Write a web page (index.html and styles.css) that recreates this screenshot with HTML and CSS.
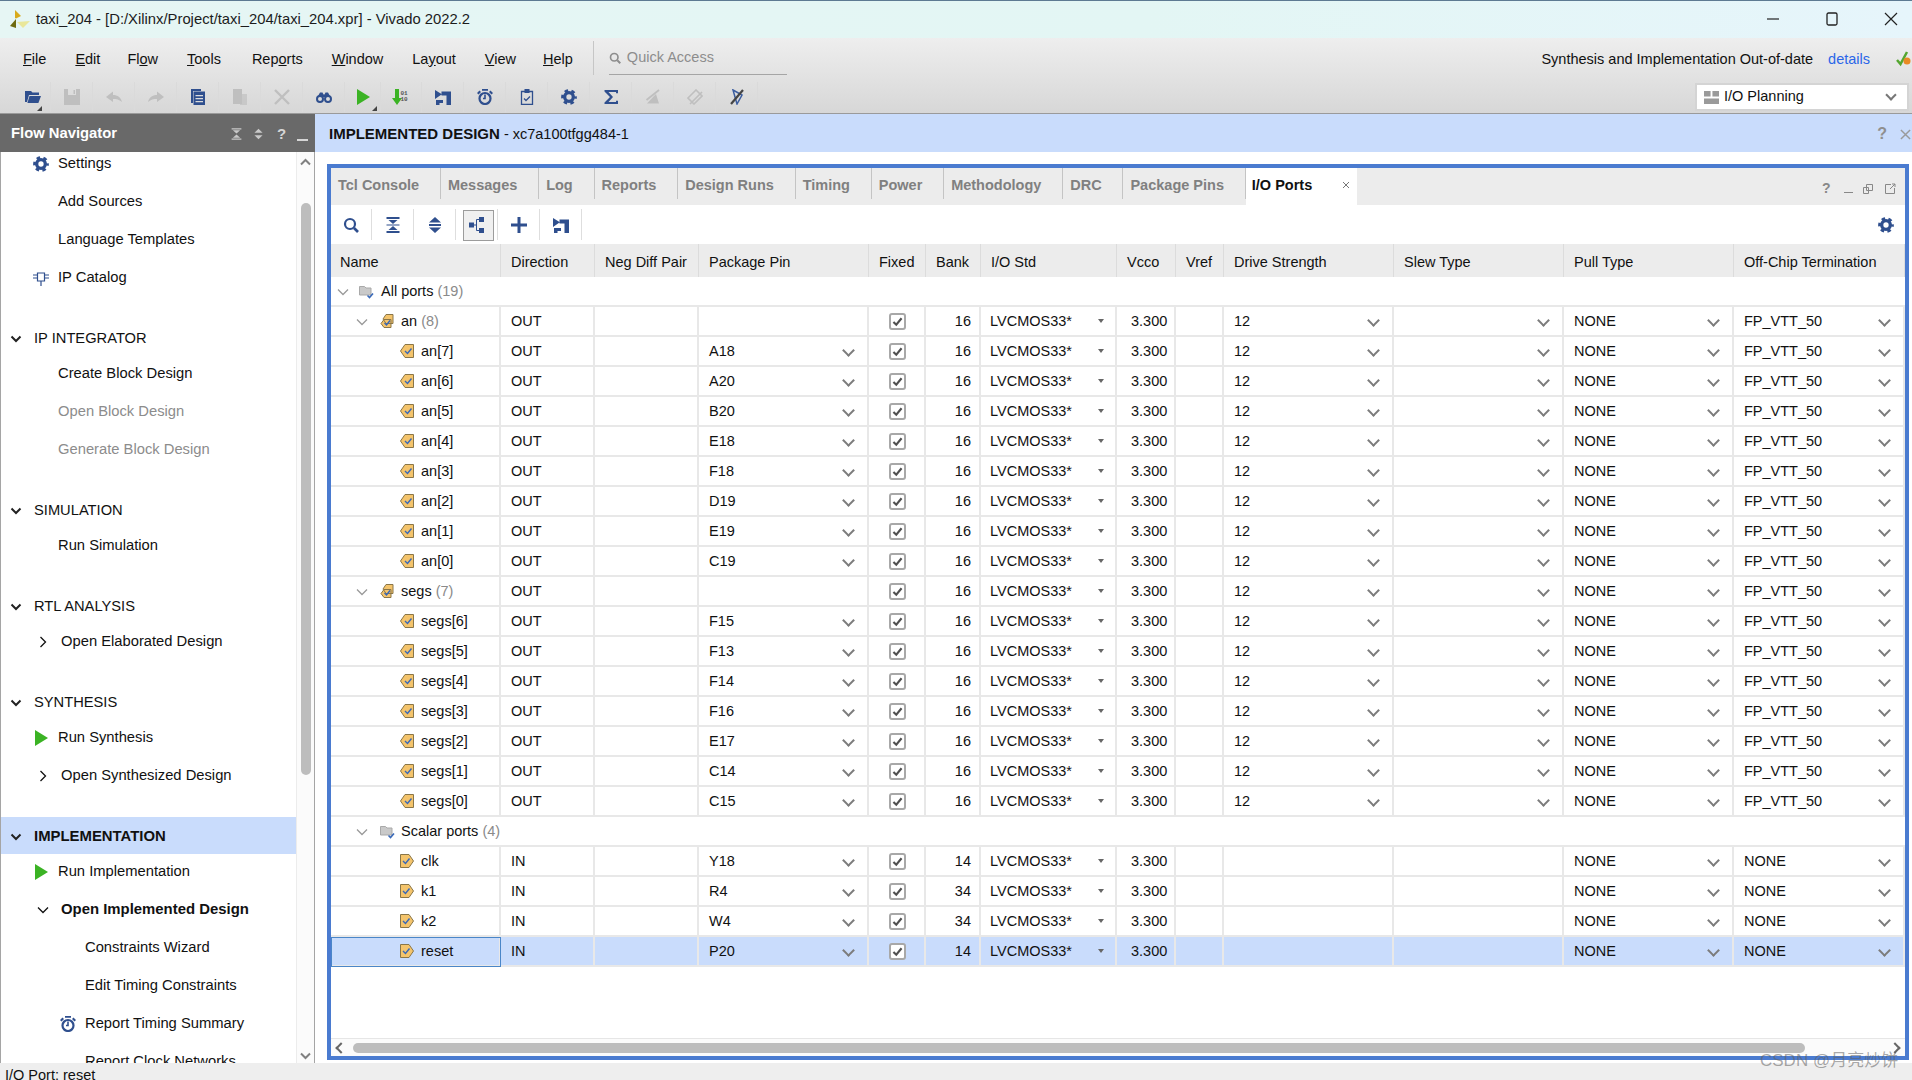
FILE: index.html
```html
<!DOCTYPE html>
<html lang="en">
<head>
<meta charset="utf-8">
<title>Vivado 2022.2</title>
<link rel="stylesheet" href="styles.css">
</head>
<body>
<svg class="defs" xmlns="http://www.w3.org/2000/svg">
<symbol id="folder" viewBox="0 0 16 16"><path d="M0 2h6l1.5 1.5H14V6H4L2 13H0z"/><path d="M4.500 7H16l-2.600 7H2.400z"/></symbol>
<symbol id="save" viewBox="0 0 16 16"><path fill-rule="evenodd" d="M0 0h16v16H0zM4 0v6h8V0zM9.500 1v4H11V1z"/></symbol>
<symbol id="undo" viewBox="0 0 16 16"><path d="M7 2.500 0 8l7 5V10c3.500 0 6 .5 9 3-1-4.500-4.500-7-9-7z"/></symbol>
<symbol id="redo" viewBox="0 0 16 16"><path d="M9 2.500 16 8l-7 5V10c-3.500 0-6 .5-9 3 1-4.500 4.500-7 9-7z"/></symbol>
<symbol id="doc" viewBox="0 0 16 16"><path d="M1 0h10v2H3v12H1z"/><path fill-rule="evenodd" d="M3.500 2.500H15V16H3.500zM5.500 6v1.300h7.500V6zM5.500 9v1.300h7.500V9zM5.500 12v1.300h7.500V12z"/></symbol>
<symbol id="paste" viewBox="0 0 16 16"><path d="M1 0h9v15H1z"/><path opacity=".65" d="M8 5h7v11H8z"/></symbol>
<symbol id="cross" viewBox="0 0 16 16"><path fill="none" stroke="currentColor" stroke-width="2.400" d="M1 1l14 14M15 1 1 15"/></symbol>
<symbol id="binoc" viewBox="0 0 16 16"><path d="M1.500 8 4 3.500h2.500l1 2h1l1-2H12L14.500 8z"/><circle cx="4" cy="10" r="3" fill="none" stroke="currentColor" stroke-width="2"/><circle cx="12" cy="10" r="3" fill="none" stroke="currentColor" stroke-width="2"/></symbol>
<symbol id="play" viewBox="0 0 16 16"><path d="M2 0 15 8 2 16z"/></symbol>
<symbol id="route" viewBox="0 0 16 16"><path d="M0 1l6.500 4V2.500H16V16h-4.500V6.500h-5V5.500L0 10zM1 16v-5h7v3H4.500v2z"/></symbol>
<symbol id="watch" viewBox="0 0 16 16"><circle cx="8" cy="9.500" r="5.500" fill="none" stroke="currentColor" stroke-width="2.200"/><path d="M5 0h6v1.800H5zM7.200 5.500h1.600v4.800H6V8.800h1.200zM0 4l2.500-2.500 1.500 1.500-2.500 2.500zM16 4l-2.500-2.500-1.500 1.500 2.500 2.500z"/></symbol>
<symbol id="clip" viewBox="0 0 16 16"><path fill="none" stroke="currentColor" stroke-width="1.300" d="M2.500 2.500h11v13h-11z"/><path d="M5.500 0h5v4h-5z"/><path fill="none" stroke="currentColor" stroke-width="1.300" d="M5 9.500l2 2 4-4"/></symbol>
<symbol id="gear" viewBox="0 0 24 24"><circle cx="12" cy="12" r="6.500" fill="none" stroke="currentColor" stroke-width="5"/><circle cx="12" cy="12" r="9.800" fill="none" stroke="currentColor" stroke-width="4" stroke-dasharray="5.200 5.060" stroke-dashoffset="2.600"/></symbol>
<symbol id="sigma" viewBox="0 0 16 16"><path d="M1.500 1H15v3.200h-2V3H5.500L10 8l-4.500 5H13v-1.200h2V15H1.500v-1.500L7 8 1.500 2.500z"/></symbol>
<symbol id="tri" viewBox="0 0 16 16"><path d="M2 14.500h12L11 5 9 7z"/><path fill="none" stroke="currentColor" stroke-width="1.800" d="M1.500 11 14 1"/></symbol>
<symbol id="dia" viewBox="0 0 16 16"><path fill="none" stroke="currentColor" stroke-width="1.600" d="M1 9l8-8 6 6-8 8zM3 15 15 3"/></symbol>
<symbol id="slash" viewBox="0 0 16 16"><path fill="none" stroke="#3c5ea0" stroke-width="1.500" d="M4 1l9 5-5 9z"/><path fill="none" stroke="#444" stroke-width="2.200" d="M2 15 14 1"/></symbol>
<symbol id="search" viewBox="0 0 16 16"><circle cx="7" cy="7" r="5" fill="none" stroke="currentColor" stroke-width="2.200"/><path fill="none" stroke="currentColor" stroke-width="2.600" d="M11 11l4 4"/></symbol>
<symbol id="expand" viewBox="0 0 16 16"><path d="M1.500 0h13v2h-13zM3.500 3h9L8 7zM1.500 7.500h13v1h-13zM8 9l4.500 4h-9zM1.500 14h13v2h-13z"/></symbol>
<symbol id="collapse" viewBox="0 0 16 16"><path d="M8 0l6 5.500H2zM2 7h12v2H2zM2 10.500h12L8 16z"/></symbol>
<symbol id="group" viewBox="0 0 16 16"><path d="M0 5.500h5v5H0zM10 0h5v5h-5zM10 11h5v5h-5z"/><path fill="none" stroke="currentColor" d="M5 8h2.500M7.500 2.500v11M7.500 2.500H10M7.500 13.500H10"/></symbol>
<symbol id="plus" viewBox="0 0 16 16"><path fill="none" stroke="currentColor" stroke-width="3" d="M8 0v16M0 8h16"/></symbol>
<symbol id="ipcat" viewBox="0 0 16 16"><path fill="none" stroke="currentColor" stroke-width="1.200" d="M4.500 3h7v8h-7zM0 5h4.500M0 8h4.500M11.500 5H16M11.500 8H16M8 11v5"/></symbol>
<symbol id="navexp" viewBox="0 0 16 16"><path d="M2 1h12v1.500H2zM3.500 3.500h9L8 7.500zM8 8.500l4.500 4h-9zM2 13.500h12V15H2z"/></symbol>
<symbol id="navcol" viewBox="0 0 16 16"><path d="M8 1.500l5 5H3zM3 9.500h10l-5 5z"/></symbol>
<symbol id="fold" viewBox="0 0 16 16"><path fill="#c9c9c9" stroke="#a9a9a9" d="M1.500 3.500h5l1.500 1.500h5v7h-11.500z"/><path fill="none" stroke="#3868b8" stroke-width="1.600" d="M9.500 12.500l2 2 3.500-4"/></symbol>
<symbol id="bus" viewBox="0 0 16 16"><path fill="#f4c46c" stroke="#8a7648" d="M7 1.500h7v9H7L4 6zM5 6.500h7v8H5L2 10.500z"/><path fill="none" stroke="#3868b8" stroke-width="1.400" d="M5.500 10l2 2 3.500-4.500"/></symbol>
<symbol id="pout" viewBox="0 0 16 16"><path fill="#f4c46c" stroke="#8a7648" d="M6 1.500h8.500v13H6L1.500 8z"/><path fill="none" stroke="#3868b8" stroke-width="1.400" d="M6 8l2.500 2.500 4-5"/></symbol>
<symbol id="pin" viewBox="0 0 16 16"><path fill="#f4c46c" stroke="#8a7648" d="M1.500 1.500H10L14.500 8 10 14.500H1.500z"/><path fill="none" stroke="#3868b8" stroke-width="1.400" d="M4 8l2.500 2.500 4-5"/></symbol>
<symbol id="tick" viewBox="0 0 16 16"><path fill="none" stroke="currentColor" stroke-width="2.600" d="M3 8.500l3.500 3.500L13 4"/></symbol>
<symbol id="tree" viewBox="0 0 12 12"><path fill="none" stroke="currentColor" stroke-width="1.300" d="M1 3.500l5 5 5-5"/></symbol>
<symbol id="treer" viewBox="0 0 12 12"><path fill="none" stroke="currentColor" stroke-width="1.300" d="M3.500 1l5 5-5 5"/></symbol>
<symbol id="navch" viewBox="0 0 12 12"><path fill="none" stroke="currentColor" stroke-width="2" d="M1.500 3.500 6 8l4.500-4.500"/></symbol>
</svg>

<header class="titlebar">
  <svg class="logo" viewBox="0 0 22 21"><path fill="#d8aa1c" d="M6 1l6 6-5 2.500L6 9z"/><path fill="#6e6a10" d="M1 17l6-7v9z"/><path fill="#e9e79a" d="M8 13l13-1-7 7z"/></svg>
  <span class="apptitle">taxi_204 - [D:/Xilinx/Project/taxi_204/taxi_204.xpr] - Vivado 2022.2</span>
  <div class="winbtns">
    <svg class="wb" viewBox="0 0 14 14"><path stroke="#222" stroke-width="1.200" d="M1 7h12"/></svg>
    <svg class="wb" viewBox="0 0 14 14"><rect x="2" y="1" width="10" height="12" rx="1.500" fill="none" stroke="#222" stroke-width="1.300"/></svg>
    <svg class="wb" viewBox="0 0 14 14"><path stroke="#222" stroke-width="1.200" d="M1 1l12 12M13 1 1 13"/></svg>
  </div>
</header>

<section class="chrome">
  <div class="menubar">
    <nav class="menus">
      <span><u>F</u>ile</span><span><u>E</u>dit</span><span class="m-flow">Fl<u>o</u>w</span><span><u>T</u>ools</span><span class="m-rep">Rep<u>o</u>rts</span><span><u>W</u>indow</span><span>La<u>y</u>out</span><span><u>V</u>iew</span><span class="m-help"><u>H</u>elp</span>
    </nav>
    <div class="quick"><svg class="qi"><use href="#search"/></svg><span>Quick Access</span></div>
    <div class="status"><span>Synthesis and Implementation Out-of-date</span><a class="details">details</a>
      <svg class="okmark" viewBox="0 0 16 16"><path fill="none" stroke="#55a630" stroke-width="2.500" d="M1 9l3.500 4L11 1"/><circle cx="11" cy="10" r="3.500" fill="#e98a24"/></svg>
    </div>
  </div>
  <div class="toolbar">
    <span class="tb navy more first"><svg><use href="#folder"/></svg></span>
    <span class="tb off"><svg><use href="#save"/></svg></span>
    <span class="tb off"><svg><use href="#undo"/></svg></span>
    <span class="tb off"><svg><use href="#redo"/></svg></span>
    <span class="tb navy"><svg><use href="#doc"/></svg></span>
    <span class="tb off"><svg><use href="#paste"/></svg></span>
    <span class="tb off"><svg><use href="#cross"/></svg></span>
    <span class="tb navy"><svg><use href="#binoc"/></svg></span>
    <span class="tb green more narrow"><svg><use href="#play"/></svg></span>
    <span class="tb bitcell"><svg viewBox="0 0 16 16"><path fill="#3bb324" d="M3 0h4v9h3l-5 7-5-7h3z"/><text class="bits" x="8.500" y="6">01</text><text class="bits" x="8.500" y="12">10</text></svg></span>
    <span class="tb navy"><svg><use href="#route"/></svg></span>
    <span class="tb navy"><svg><use href="#watch"/></svg></span>
    <span class="tb navy"><svg><use href="#clip"/></svg></span>
    <span class="tb navy"><svg><use href="#gear"/></svg></span>
    <span class="tb navy"><svg><use href="#sigma"/></svg></span>
    <span class="tb off"><svg><use href="#tri"/></svg></span>
    <span class="tb off"><svg><use href="#dia"/></svg></span>
    <span class="tb"><svg><use href="#slash"/></svg></span>
    <div class="layout"><svg class="lay" viewBox="0 0 16 16"><path fill="#9a9a9a" d="M0 1h7v6H0zM9 1h7v6H9zM0 9h16v6H0z"/></svg><span>I/O Planning</span><i class="arrow"></i></div>
  </div>
</section>

<div class="workspace">
  <aside class="flownav">
    <div class="navhead">
      <span class="navtitle">Flow Navigator</span>
      <svg class="nh"><use href="#navexp"/></svg>
      <svg class="nh"><use href="#navcol"/></svg>
      <b class="nq">?</b>
      <span class="nmin"></span>
    </div>
    <div class="navbody">
      <div class="navlist">
        <div class="it"><svg class="slot navy"><use href="#gear"/></svg>Settings</div>
        <div class="it"><span class="slot"></span>Add Sources</div>
        <div class="it"><span class="slot"></span>Language Templates</div>
        <div class="it"><svg class="slot navy"><use href="#ipcat"/></svg>IP Catalog</div>

        <div class="sec"><svg class="sch"><use href="#navch"/></svg>IP INTEGRATOR</div>
        <div class="items">
          <div class="it"><span class="slot"></span>Create Block Design</div>
          <div class="it dim"><span class="slot"></span>Open Block Design</div>
          <div class="it dim"><span class="slot"></span>Generate Block Design</div>
        </div>

        <div class="sec"><svg class="sch"><use href="#navch"/></svg>SIMULATION</div>
        <div class="items">
          <div class="it"><span class="slot"></span>Run Simulation</div>
        </div>

        <div class="sec"><svg class="sch"><use href="#navch"/></svg>RTL ANALYSIS</div>
        <div class="items">
          <div class="it sub"><svg class="slot"><use href="#treer"/></svg>Open Elaborated Design</div>
        </div>

        <div class="sec"><svg class="sch"><use href="#navch"/></svg>SYNTHESIS</div>
        <div class="items">
          <div class="it"><svg class="slot green"><use href="#play"/></svg>Run Synthesis</div>
          <div class="it sub"><svg class="slot"><use href="#treer"/></svg>Open Synthesized Design</div>
        </div>

        <div class="sec active"><svg class="sch"><use href="#navch"/></svg>IMPLEMENTATION</div>
        <div class="items">
          <div class="it"><svg class="slot green"><use href="#play"/></svg>Run Implementation</div>
          <div class="it sub strong"><svg class="slot"><use href="#tree"/></svg>Open Implemented Design</div>
          <div class="it deep"><span class="slot"></span>Constraints Wizard</div>
          <div class="it deep"><span class="slot"></span>Edit Timing Constraints</div>
          <div class="it deep"><svg class="slot navy"><use href="#watch"/></svg>Report Timing Summary</div>
          <div class="it deep"><span class="slot"></span>Report Clock Networks</div>
        </div>
      </div>
      <div class="navscroll">
        <svg class="sa up"><use href="#navch"/></svg>
        <div class="sthumb"></div>
        <svg class="sa down"><use href="#navch"/></svg>
      </div>
    </div>
  </aside>

  <main class="main">
    <div class="dhead">
      <span><b>IMPLEMENTED DESIGN</b> - xc7a100tfgg484-1</span>
      <b class="dq">?</b>
      <svg class="dx" viewBox="0 0 12 12"><path stroke="#9a9a9a" stroke-width="1.600" d="M1 1l10 10M11 1 1 11"/></svg>
    </div>
    <div class="panel">
      <div class="tabs">
        <span class="tab">Tcl Console</span><span class="tab">Messages</span><span class="tab">Log</span><span class="tab">Reports</span><span class="tab">Design Runs</span><span class="tab">Timing</span><span class="tab">Power</span><span class="tab">Methodology</span><span class="tab">DRC</span><span class="tab">Package Pins</span>
        <span class="tab on">I/O Ports<svg class="tx" viewBox="0 0 8 8"><path stroke="#777" d="M1 1l6 6M7 1 1 7"/></svg></span>
        <div class="tabtools">
          <span class="tq">?</span>
          <span class="tmin"></span>
          <svg class="tt" viewBox="0 0 12 12"><path fill="none" stroke="#888" d="M4.500 1.500h6v6h-6zM1.500 4.500h5v6h-5z"/></svg>
          <svg class="tt" viewBox="0 0 12 12"><path fill="none" stroke="#888" d="M7 1.500H1.500v9h9V5M6 6l5-5M8 1h3v3"/></svg>
        </div>
      </div>
      <div class="tbar">
        <span class="tc"><svg><use href="#search"/></svg></span>
        <span class="tc"><svg><use href="#expand"/></svg></span>
        <span class="tc"><svg><use href="#collapse"/></svg></span>
        <span class="tc pressed"><svg><use href="#group"/></svg></span>
        <span class="tc"><svg><use href="#plus"/></svg></span>
        <span class="tc"><svg><use href="#route"/></svg></span>
        <svg class="tgear"><use href="#gear"/></svg>
      </div>
      <div class="grid">
        <table class="ports">
          <colgroup><col class="c1"><col class="c2"><col class="c3"><col class="c4"><col class="c5"><col class="c6"><col class="c7"><col class="c8"><col class="c9"><col class="c10"><col class="c10"><col class="c10"><col class="c13"></colgroup>
          <thead><tr><th>Name</th><th>Direction</th><th>Neg Diff Pair</th><th>Package Pin</th><th>Fixed</th><th>Bank</th><th>I/O Std</th><th>Vcco</th><th>Vref</th><th>Drive Strength</th><th>Slew Type</th><th>Pull Type</th><th>Off-Chip Termination</th></tr></thead>
          <tbody>
            <tr><td class="lv0 whole" colspan="13"><svg class="tw"><use href="#tree"/></svg><svg class="ic"><use href="#fold"/></svg>All ports <em>(19)</em></td></tr>
            <tr><td class="lv1"><svg class="tw"><use href="#tree"/></svg><svg class="ic"><use href="#bus"/></svg>an <em>(8)</em></td><td>OUT</td><td></td><td></td><td class="ck"><span class="cb"><svg><use href="#tick"/></svg></span></td><td class="r">16</td><td class="dd">LVCMOS33*</td><td class="v">3.300</td><td></td><td class="sel">12</td><td class="sel"></td><td class="sel">NONE</td><td class="sel">FP_VTT_50</td></tr>
            <tr><td class="lv2"><svg class="ic"><use href="#pout"/></svg>an[7]</td><td>OUT</td><td></td><td class="sel">A18</td><td class="ck"><span class="cb"><svg><use href="#tick"/></svg></span></td><td class="r">16</td><td class="dd">LVCMOS33*</td><td class="v">3.300</td><td></td><td class="sel">12</td><td class="sel"></td><td class="sel">NONE</td><td class="sel">FP_VTT_50</td></tr>
            <tr><td class="lv2"><svg class="ic"><use href="#pout"/></svg>an[6]</td><td>OUT</td><td></td><td class="sel">A20</td><td class="ck"><span class="cb"><svg><use href="#tick"/></svg></span></td><td class="r">16</td><td class="dd">LVCMOS33*</td><td class="v">3.300</td><td></td><td class="sel">12</td><td class="sel"></td><td class="sel">NONE</td><td class="sel">FP_VTT_50</td></tr>
            <tr><td class="lv2"><svg class="ic"><use href="#pout"/></svg>an[5]</td><td>OUT</td><td></td><td class="sel">B20</td><td class="ck"><span class="cb"><svg><use href="#tick"/></svg></span></td><td class="r">16</td><td class="dd">LVCMOS33*</td><td class="v">3.300</td><td></td><td class="sel">12</td><td class="sel"></td><td class="sel">NONE</td><td class="sel">FP_VTT_50</td></tr>
            <tr><td class="lv2"><svg class="ic"><use href="#pout"/></svg>an[4]</td><td>OUT</td><td></td><td class="sel">E18</td><td class="ck"><span class="cb"><svg><use href="#tick"/></svg></span></td><td class="r">16</td><td class="dd">LVCMOS33*</td><td class="v">3.300</td><td></td><td class="sel">12</td><td class="sel"></td><td class="sel">NONE</td><td class="sel">FP_VTT_50</td></tr>
            <tr><td class="lv2"><svg class="ic"><use href="#pout"/></svg>an[3]</td><td>OUT</td><td></td><td class="sel">F18</td><td class="ck"><span class="cb"><svg><use href="#tick"/></svg></span></td><td class="r">16</td><td class="dd">LVCMOS33*</td><td class="v">3.300</td><td></td><td class="sel">12</td><td class="sel"></td><td class="sel">NONE</td><td class="sel">FP_VTT_50</td></tr>
            <tr><td class="lv2"><svg class="ic"><use href="#pout"/></svg>an[2]</td><td>OUT</td><td></td><td class="sel">D19</td><td class="ck"><span class="cb"><svg><use href="#tick"/></svg></span></td><td class="r">16</td><td class="dd">LVCMOS33*</td><td class="v">3.300</td><td></td><td class="sel">12</td><td class="sel"></td><td class="sel">NONE</td><td class="sel">FP_VTT_50</td></tr>
            <tr><td class="lv2"><svg class="ic"><use href="#pout"/></svg>an[1]</td><td>OUT</td><td></td><td class="sel">E19</td><td class="ck"><span class="cb"><svg><use href="#tick"/></svg></span></td><td class="r">16</td><td class="dd">LVCMOS33*</td><td class="v">3.300</td><td></td><td class="sel">12</td><td class="sel"></td><td class="sel">NONE</td><td class="sel">FP_VTT_50</td></tr>
            <tr><td class="lv2"><svg class="ic"><use href="#pout"/></svg>an[0]</td><td>OUT</td><td></td><td class="sel">C19</td><td class="ck"><span class="cb"><svg><use href="#tick"/></svg></span></td><td class="r">16</td><td class="dd">LVCMOS33*</td><td class="v">3.300</td><td></td><td class="sel">12</td><td class="sel"></td><td class="sel">NONE</td><td class="sel">FP_VTT_50</td></tr>
            <tr><td class="lv1"><svg class="tw"><use href="#tree"/></svg><svg class="ic"><use href="#bus"/></svg>segs <em>(7)</em></td><td>OUT</td><td></td><td></td><td class="ck"><span class="cb"><svg><use href="#tick"/></svg></span></td><td class="r">16</td><td class="dd">LVCMOS33*</td><td class="v">3.300</td><td></td><td class="sel">12</td><td class="sel"></td><td class="sel">NONE</td><td class="sel">FP_VTT_50</td></tr>
            <tr><td class="lv2"><svg class="ic"><use href="#pout"/></svg>segs[6]</td><td>OUT</td><td></td><td class="sel">F15</td><td class="ck"><span class="cb"><svg><use href="#tick"/></svg></span></td><td class="r">16</td><td class="dd">LVCMOS33*</td><td class="v">3.300</td><td></td><td class="sel">12</td><td class="sel"></td><td class="sel">NONE</td><td class="sel">FP_VTT_50</td></tr>
            <tr><td class="lv2"><svg class="ic"><use href="#pout"/></svg>segs[5]</td><td>OUT</td><td></td><td class="sel">F13</td><td class="ck"><span class="cb"><svg><use href="#tick"/></svg></span></td><td class="r">16</td><td class="dd">LVCMOS33*</td><td class="v">3.300</td><td></td><td class="sel">12</td><td class="sel"></td><td class="sel">NONE</td><td class="sel">FP_VTT_50</td></tr>
            <tr><td class="lv2"><svg class="ic"><use href="#pout"/></svg>segs[4]</td><td>OUT</td><td></td><td class="sel">F14</td><td class="ck"><span class="cb"><svg><use href="#tick"/></svg></span></td><td class="r">16</td><td class="dd">LVCMOS33*</td><td class="v">3.300</td><td></td><td class="sel">12</td><td class="sel"></td><td class="sel">NONE</td><td class="sel">FP_VTT_50</td></tr>
            <tr><td class="lv2"><svg class="ic"><use href="#pout"/></svg>segs[3]</td><td>OUT</td><td></td><td class="sel">F16</td><td class="ck"><span class="cb"><svg><use href="#tick"/></svg></span></td><td class="r">16</td><td class="dd">LVCMOS33*</td><td class="v">3.300</td><td></td><td class="sel">12</td><td class="sel"></td><td class="sel">NONE</td><td class="sel">FP_VTT_50</td></tr>
            <tr><td class="lv2"><svg class="ic"><use href="#pout"/></svg>segs[2]</td><td>OUT</td><td></td><td class="sel">E17</td><td class="ck"><span class="cb"><svg><use href="#tick"/></svg></span></td><td class="r">16</td><td class="dd">LVCMOS33*</td><td class="v">3.300</td><td></td><td class="sel">12</td><td class="sel"></td><td class="sel">NONE</td><td class="sel">FP_VTT_50</td></tr>
            <tr><td class="lv2"><svg class="ic"><use href="#pout"/></svg>segs[1]</td><td>OUT</td><td></td><td class="sel">C14</td><td class="ck"><span class="cb"><svg><use href="#tick"/></svg></span></td><td class="r">16</td><td class="dd">LVCMOS33*</td><td class="v">3.300</td><td></td><td class="sel">12</td><td class="sel"></td><td class="sel">NONE</td><td class="sel">FP_VTT_50</td></tr>
            <tr><td class="lv2"><svg class="ic"><use href="#pout"/></svg>segs[0]</td><td>OUT</td><td></td><td class="sel">C15</td><td class="ck"><span class="cb"><svg><use href="#tick"/></svg></span></td><td class="r">16</td><td class="dd">LVCMOS33*</td><td class="v">3.300</td><td></td><td class="sel">12</td><td class="sel"></td><td class="sel">NONE</td><td class="sel">FP_VTT_50</td></tr>
            <tr><td class="lv1 whole" colspan="13"><svg class="tw"><use href="#tree"/></svg><svg class="ic"><use href="#fold"/></svg>Scalar ports <em>(4)</em></td></tr>
            <tr><td class="lv2"><svg class="ic"><use href="#pin"/></svg>clk</td><td>IN</td><td></td><td class="sel">Y18</td><td class="ck"><span class="cb"><svg><use href="#tick"/></svg></span></td><td class="r">14</td><td class="dd">LVCMOS33*</td><td class="v">3.300</td><td></td><td></td><td></td><td class="sel">NONE</td><td class="sel">NONE</td></tr>
            <tr><td class="lv2"><svg class="ic"><use href="#pin"/></svg>k1</td><td>IN</td><td></td><td class="sel">R4</td><td class="ck"><span class="cb"><svg><use href="#tick"/></svg></span></td><td class="r">34</td><td class="dd">LVCMOS33*</td><td class="v">3.300</td><td></td><td></td><td></td><td class="sel">NONE</td><td class="sel">NONE</td></tr>
            <tr><td class="lv2"><svg class="ic"><use href="#pin"/></svg>k2</td><td>IN</td><td></td><td class="sel">W4</td><td class="ck"><span class="cb"><svg><use href="#tick"/></svg></span></td><td class="r">34</td><td class="dd">LVCMOS33*</td><td class="v">3.300</td><td></td><td></td><td></td><td class="sel">NONE</td><td class="sel">NONE</td></tr>
            <tr class="picked"><td class="lv2"><svg class="ic"><use href="#pin"/></svg>reset</td><td>IN</td><td></td><td class="sel">P20</td><td class="ck"><span class="cb"><svg><use href="#tick"/></svg></span></td><td class="r">14</td><td class="dd">LVCMOS33*</td><td class="v">3.300</td><td></td><td></td><td></td><td class="sel">NONE</td><td class="sel">NONE</td></tr>
          </tbody>
        </table>
      </div>
      <div class="hscroll">
        <i class="ha left"></i>
        <div class="hthumb"></div>
        <i class="ha right"></i>
      </div>
    </div>
  </main>
</div>

<footer class="statusbar">I/O Port: reset</footer>
<div class="watermark">CSDN @月亮炒饼</div>
</body>
</html>
```

FILE: styles.css
```css
* { box-sizing: border-box; }
html, body { margin: 0; padding: 0; }
body {
  width: 1912px; height: 1080px; overflow: hidden; position: relative;
  display: flex; flex-direction: column;
  font: 14.5px/1.2 "Liberation Sans", Arial, sans-serif; color: #111; background: #fff;
}
.defs { display: none; }
.navy { color: #2f4f8e; fill: #2f4f8e; }
.green { color: #3bb324; fill: #3bb324; }

/* title bar */
.titlebar {
  height: 38px; flex: none; display: flex; align-items: center;
  border-top: 1px solid #5d7a92;
  background: linear-gradient(90deg, #e6f6f4, #e3f6f4 60%, #e6f5fb);
  padding-left: 9px;
}
.logo { width: 22px; height: 21px; margin-top: -1px; flex: none; }
.apptitle { margin-left: 5px; font-size: 14.8px; color: #1c1c1c; }
.winbtns { margin-left: auto; display: flex; gap: 45px; padding-right: 14px; margin-top: -2px; }
.wb { width: 14px; height: 14px; display: block; }

/* menu + toolbar */
.chrome {
  flex: none; height: 76px; border-bottom: 1px solid #9a9a9a;
  background: linear-gradient(180deg, #eeeeee, #d7d7d7);
}
.menubar { height: 41px; display: flex; align-items: center; padding: 2px 0 0 23px; }
.menus { display: flex; gap: 29px; }
.m-flow { margin-left: -2px; }
.m-rep { margin-left: 2px; }
.m-help { margin-left: -2px; }
.quick {
  margin-left: 20px; width: 194px; height: 34px; margin-top: -4px;
  border-left: 1px solid #c6c6c6; position: relative;
  display: flex; align-items: center; color: #8d8d8d; padding-left: 15px;
}
.quick::after { content: ""; position: absolute; left: 15px; right: 0; bottom: 0; height: 1px; background: #a5a5a5; }
.qi { width: 12px; height: 12px; margin-right: 6px; color: #8d8d8d; fill: #8d8d8d; }
.status { margin-left: auto; display: flex; align-items: center; }
.details { color: #2a66e8; margin-left: 15px; }
.okmark { width: 16px; height: 16px; margin-left: 26px; margin-right: 0; flex: none; }
.toolbar { height: 34px; display: flex; align-items: center; padding: 2px 0 0 9px; }
.tb {
  width: 42px; height: 30px; flex: none; display: flex; align-items: center; justify-content: center;
  border-right: 1px solid #dadada; position: relative;
}
.tb svg { width: 16px; height: 16px; display: block; }
.tb.first svg { margin-left: 6px; }
.tb.narrow { width: 36px; }
.tb.bitcell { width: 41px; }
.tb.bitcell svg { margin-right: 2px; }
.tb.off { color: #bfbfbf; fill: #bfbfbf; }
.tb.more::after {
  content: ""; position: absolute; right: 8px; bottom: 1px;
  border-left: 5px solid transparent; border-bottom: 5px solid #444;
}
.tb.narrow.more::after { right: 3px; }
.bits { font: bold 6px "Liberation Mono", monospace; fill: #555; }
.layout {
  margin-left: auto; margin-right: 3px; width: 214px; height: 28px; background: #fff;
  border: 2px solid #d4d4d4; display: flex; align-items: center; padding-left: 7px;
}
.lay { width: 15px; height: 15px; margin-right: 5px; }
.arrow {
  margin-left: auto; margin-right: 12px; width: 8px; height: 8px; margin-top: -4px;
  border-right: 2px solid #777; border-bottom: 2px solid #777; transform: rotate(45deg);
}

/* workspace */
.workspace { flex: 1; min-height: 0; display: flex; }
.flownav {
  width: 315px; flex: none; display: flex; flex-direction: column;
  border-left: 1px solid #a5a5a5; border-right: 1px solid #a5a5a5;
}
.navhead {
  height: 38px; flex: none; background: #696969; color: #fff; display: flex; align-items: center;
  padding: 2px 0 0 11px; margin-left: -1px; margin-right: -1px;
}
.navtitle { font-size: 14.8px; font-weight: bold; width: 216px; }
.nh { width: 13px; height: 14px; color: #c9c9c9; fill: #c9c9c9; margin-left: 3px; margin-right: 6px; }
.nq { font-size: 15px; color: #d6d6d6; margin-left: 6px; }
.nmin { width: 11px; height: 2px; background: #d6d6d6; margin-left: 11px; margin-top: 11px; }
.navbody { flex: 1; min-height: 0; display: flex; }
.navlist { flex: 1; min-width: 0; overflow: hidden; font-size: 14.75px; }
.navlist > :first-child { margin-top: -7px; }
.it { height: 38px; display: flex; align-items: center; padding-left: 32px; }
.slot { width: 16px; height: 16px; margin-right: 9px; flex: none; display: block; }
.it.dim { color: #8c8c8c; }
.it.sub .slot { width: 12px; height: 12px; margin-left: 4px; margin-right: 12px; }
.it.strong { font-weight: bold; font-size: 14.9px; }
.it.deep { padding-left: 59px; }
.sec {
  height: 37px; display: flex; align-items: center; margin-top: 22px; padding: 2px 0 0 9px; font-size: 14.7px;
}
.items { margin-top: -1px; }
.sch { width: 12px; height: 12px; margin-right: 12px; flex: none; color: #222; }
.sec.active { background: #c9dcfc; font-weight: bold; font-size: 14.9px; }
.navscroll {
  width: 18px; flex: none; background: #fbfbfb; border-left: 1px solid #ececec;
  display: flex; flex-direction: column; align-items: center; padding-top: 4px;
}
.sa { width: 13px; height: 12px; color: #808080; flex: none; }
.sa.up { transform: rotate(180deg); }
.sthumb { width: 10px; height: 572px; border-radius: 5px; background: #bdbdbd; margin-top: 35px; }
.sa.down { margin-top: auto; margin-bottom: 1px; }

.main { flex: 1; min-width: 0; display: flex; flex-direction: column; }
.dhead {
  height: 38px; flex: none; background: #c9dcfc; display: flex; align-items: center; padding: 2px 1px 0 14px;
}
.dhead > span { flex: 1; }
.dhead > span b { font-size: 15px; }
.dq { color: #8f8f8f; font-size: 16px; margin-right: 13px; }
.dx { width: 11px; height: 11px; flex: none; }
.panel {
  flex: 1; min-height: 0; margin: 12px 3px 3px 12px; border: 4px solid #4a7bd0;
  display: flex; flex-direction: column;
}

/* tabs */
.tabs { height: 37px; flex: none; background: #ececec; display: flex; align-items: flex-start; }
.tab {
  height: 31px; display: flex; align-items: center; padding: 4px 20.850px 0 7px; font-weight: bold; color: #808080;
  border-right: 1px solid #c4c4c4;
}
.tab.on { height: 37px; background: #fff; color: #111; border: 0; padding: 9px 4px 0 6px; width: 111px; align-items: flex-start; }
.tx { width: 8px; height: 8px; margin-left: auto; margin-top: 4px; margin-right: 3px; }
.tabtools { margin-left: auto; display: flex; align-items: center; height: 37px; padding-right: 9px; padding-top: 4px; }
.tq { color: #888; width: 12px; font-weight: bold; font-size: 14px; margin-right: 3px; }
.tmin { width: 9px; height: 1.500px; background: #888; margin: 8px 9px 0 7px; }
.tt { width: 12px; height: 12px; margin-right: 10px; }
.tt:last-child { margin-right: 0; }

/* panel toolbar */
.tbar { height: 39px; flex: none; display: flex; align-items: center; }
.tc {
  width: 42px; height: 31px; flex: none; display: flex; align-items: center; justify-content: center;
  border-right: 1px solid #dedede; color: #2f4f8e; fill: #2f4f8e; position: relative;
}
.tc:first-child { width: 41px; }
.tc svg { width: 16px; height: 16px; display: block; position: relative; }
.tc.pressed::before {
  content: ""; position: absolute; left: 7px; top: 1px; width: 29px; height: 29px;
  border: 1px solid #9c9c9c; background: #f0f0f0;
}
.tgear { margin-left: auto; margin-right: 11px; width: 16px; height: 16px; color: #2f4f8e; fill: #2f4f8e; }

/* table */
.grid { flex: 1; min-height: 0; overflow: hidden; }
.ports { border-collapse: separate; border-spacing: 0; table-layout: fixed; width: 1574px; }
.c1 { width: 170px; } .c2 { width: 94px; } .c3 { width: 104px; } .c4 { width: 170px; }
.c5 { width: 57px; } .c6 { width: 55px; } .c7 { width: 136px; } .c8 { width: 59px; }
.c9 { width: 48px; } .c10 { width: 170px; } .c13 { width: 171px; }
.ports th {
  height: 33px; padding: 4px 0 0 10px; text-align: left; font-weight: normal; background: #ececec;
  border-right: 1px solid #dcdcdc; white-space: nowrap; overflow: hidden;
}
.ports th:first-child { padding-left: 9px; }
.ports td {
  height: 30px; padding: 2px 0 0 10px; border-right: 2px solid #e8e8e8; border-bottom: 2px solid #e8e8e8;
  white-space: nowrap; overflow: hidden;
}
.ports em { font-style: normal; color: #8a8a8a; }
.ports td.whole { border-right: 0; }
.ports td.lv0 { padding-left: 6px; }
.ports td.lv1 { padding-left: 25px; }
.ports td.lv2 { padding-left: 68px; }
.tw { width: 12px; height: 12px; color: #9a9a9a; margin-right: 9px; vertical-align: -2px; }
.ic { width: 16px; height: 16px; margin-right: 6px; vertical-align: -3px; }
.lv0 .ic { margin-right: 7px; }
.lv1 .tw { margin-right: 11px; }
.ports td.sel::before { content: "\200b"; }
.ports td.sel::after {
  content: ""; float: right; width: 7px; height: 7px; margin: 3px 14px 0 0;
  border-right: 2px solid #7c7c7c; border-bottom: 2px solid #7c7c7c; transform: rotate(45deg);
}
.ports td.ck { padding: 0 0 0 2px; text-align: center; }
.cb {
  display: inline-flex; width: 17px; height: 17px; border: 2px solid #a8a8a8; border-radius: 3px; background: #fff;
  color: #505050; vertical-align: middle;
}
.cb svg { width: 13px; height: 13px; display: block; }
.ports td.r { text-align: right; padding: 2px 8px 0 0; }
.ports td.v { padding-left: 14px; }
.ports td.dd { padding-left: 9px; }
.ports td.dd::after {
  content: ""; float: right; margin: 6px 11px 0 0;
  border-top: 4px solid #666; border-left: 3px solid transparent; border-right: 3px solid transparent;
}
.picked td { background: #c9dcfc; }
.picked td.lv2 { outline: 1px solid #4a86c8; outline-offset: -1px; }

.hscroll {
  height: 18px; flex: none; background: #fbfbfb; border-top: 1px solid #e6e6e6;
  display: flex; align-items: center; padding-left: 6px; padding-right: 6px;
}
.ha { width: 8px; height: 8px; border-bottom: 2px solid #666; flex: none; }
.ha.left { border-left: 2px solid #666; transform: rotate(45deg); }
.ha.right { border-right: 2px solid #666; transform: rotate(-45deg); margin-left: auto; }
.hthumb { width: 1452px; height: 10px; border-radius: 5px; background: #bdbdbd; margin-left: 8px; }

.statusbar {
  height: 17px; flex: none; background: #eeeeee; padding: 4px 0 0 5px; line-height: 17px; overflow: hidden; white-space: nowrap;
}
.watermark {
  position: absolute; left: 1760px; top: 1051px; font: 17px/20px "Liberation Sans", "Noto Sans CJK SC", sans-serif;
  color: rgba(95,95,95,.55); white-space: nowrap;
}
```
